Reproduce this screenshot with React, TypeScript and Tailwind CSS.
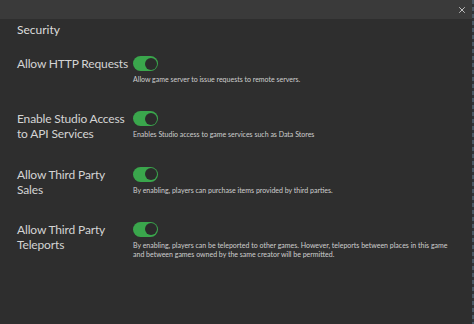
import { X } from "lucide-react";

type Setting = {
  label: string;
  description: string;
};

const settings: Setting[] = [
  {
    label: "Allow HTTP Requests",
    description: "Allow game server to issue requests to remote servers.",
  },
  {
    label: "Enable Studio Access to API Services",
    description: "Enables Studio access to game services such as Data Stores",
  },
  {
    label: "Allow Third Party Sales",
    description: "By enabling, players can purchase items provided by third parties.",
  },
  {
    label: "Allow Third Party Teleports",
    description:
      "By enabling, players can be teleported to other games. However, teleports between places in this game and between games owned by the same creator will be permitted.",
  },
];

function Toggle() {
  return (
    <div className="flex h-[15px] w-[25px] items-center justify-end rounded-full bg-[#3aa64c] pr-[1.5px]">
      <div className="h-[12px] w-[12px] rounded-full bg-[#2b2b2b]" />
    </div>
  );
}

export default function App() {
  return (
    <div className="flex h-[324px] w-[474px] bg-[#2e2e2e] font-['Lato',sans-serif]">
      <div className="flex flex-1 flex-col">
        {/* title bar */}
        <div className="flex h-[19px] items-center justify-end bg-[#3a3a3a] pr-[5px]">
          <X size={10} strokeWidth={2} className="text-[#d8d8d8]" />
        </div>

        <div className="flex flex-col pl-[17px] pt-[3px]">
          <div className="mb-[18px] h-4 text-[12px] leading-4 text-[#dcdcdc]">Security</div>

          {settings.map((s) => (
            <div key={s.label} className="flex h-[55.3px]">
              <div className="w-[116px] pr-[4px] text-[12px] leading-[15px] tracking-[-0.15px] text-[#d4d4d4]">
                {s.label}
              </div>
              <div className="flex flex-1 flex-col pr-4">
                <Toggle />
                <p className="mt-[4px] text-[7px] leading-[9px] text-[#cfcfcf]">{s.description}</p>
              </div>
            </div>
          ))}
        </div>
      </div>

      {/* scroll edge */}
      <div className="w-[2px] bg-[repeating-linear-gradient(to_bottom,#4a5966_0px,#4a5966_4px,#2f3439_4px,#2f3439_7px)]" />
    </div>
  );
}
